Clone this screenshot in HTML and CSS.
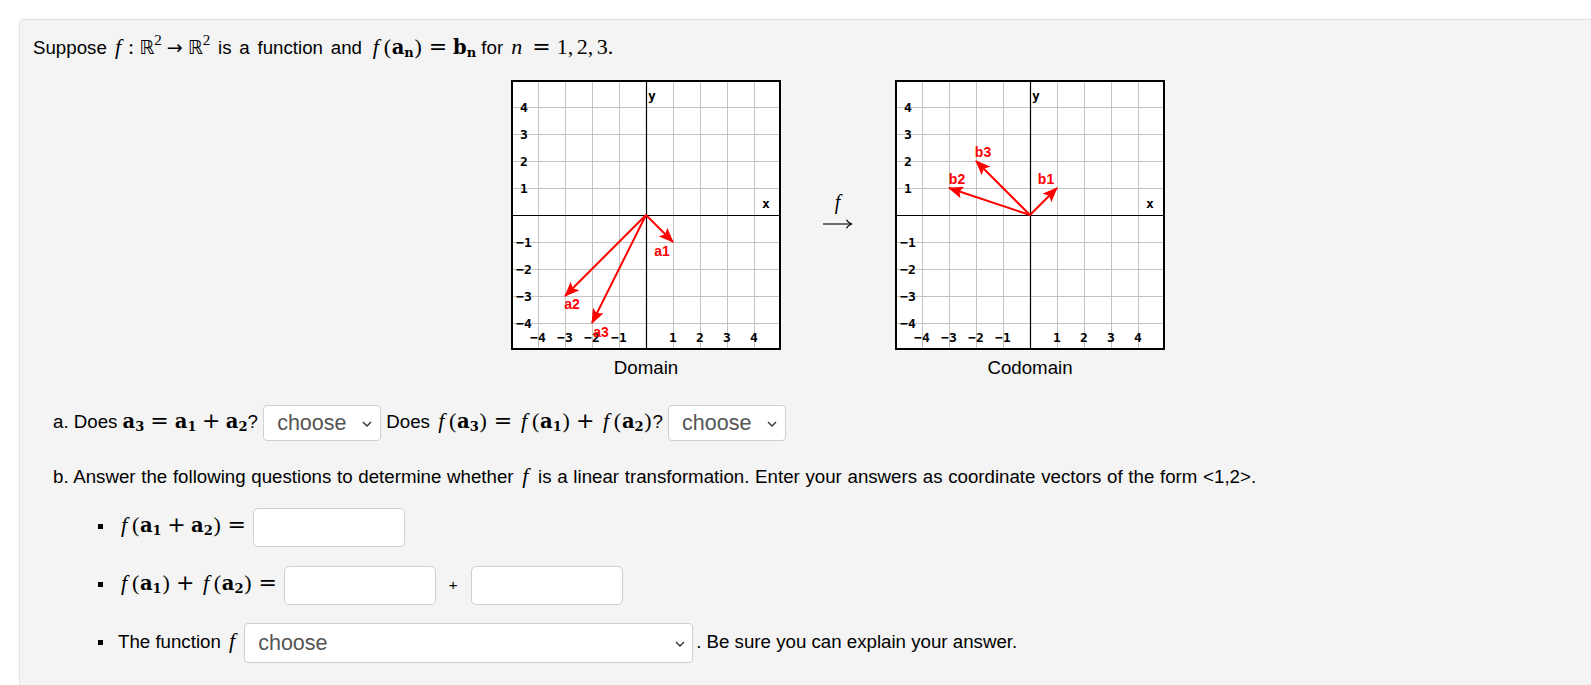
FILE: index.html
```html
<!DOCTYPE html>
<html lang="en">
<head>
<meta charset="utf-8">
<title>Linear transformation problem</title>
<link rel="stylesheet" href="styles.css">
</head>
<body>
<div class="panel">
  <p class="intro">Suppose <span class="m"><i class="mi">f</i><span class="colon">:</span><span class="bb">ℝ</span><sup>2</sup><span class="op arr rel">→</span><span class="bb">ℝ</span><sup>2</sup></span><span class="wide"> is a function and </span><span class="m"><i class="mi">f</i><span class="pa">(</span><b class="mb">a</b><sub>n</sub><span class="pa">)</span><span class="op rel">=</span><b class="mb">b</b><sub>n</sub></span> for <span class="m"><i class="mi">n</i><span class="op rel">=</span>1,<span class="thin"></span>2,<span class="thin"></span>3.</span></p>

  <div class="graphs">
    <figure class="graph">
      <svg width="270" height="270" viewBox="0 0 270 270" class="plot">
        <defs>
          <marker id="ah" markerUnits="userSpaceOnUse" markerWidth="15" markerHeight="12" refX="14" refY="6" orient="auto">
            <path d="M0,0 L15,6 L0,12 L3,6 z" fill="#ff0000"/>
          </marker>
        </defs>
        <rect x="0" y="0" width="270" height="270" fill="#fff"/>
        <g stroke="#c4c4c4" stroke-width="1">
          <path d="M27.5,0V270M54.5,0V270M81.5,0V270M108.5,0V270M162.5,0V270M189.5,0V270M216.5,0V270M243.5,0V270"/>
          <path d="M0,27.5H270M0,54.5H270M0,81.5H270M0,108.5H270M0,162.5H270M0,189.5H270M0,216.5H270M0,243.5H270"/>
        </g>
        <path d="M135.5,0V270M0,135.5H270" stroke="#000" stroke-width="1.2"/>
        <rect x="1" y="1" width="268" height="268" fill="none" stroke="#000" stroke-width="2"/>
        <g class="ticks">
          <text x="13" y="32">4</text><text x="13" y="59">3</text><text x="13" y="86">2</text><text x="13" y="113">1</text>
          <text x="13" y="167">−1</text><text x="13" y="194">−2</text><text x="13" y="221">−3</text><text x="13" y="248">−4</text>
          <text x="27" y="262">−4</text><text x="54" y="262">−3</text><text x="81" y="262">−2</text><text x="108" y="262">−1</text>
          <text x="162" y="262">1</text><text x="189" y="262">2</text><text x="216" y="262">3</text><text x="243" y="262">4</text>
          <text x="141" y="20">y</text><text x="255" y="128">x</text>
        </g>
        <g stroke="#ff0000" stroke-width="2" marker-end="url(#ah)">
          <line x1="135" y1="135" x2="162" y2="162"/>
          <line x1="135" y1="135" x2="54" y2="216"/>
          <line x1="135" y1="135" x2="81" y2="243"/>
        </g>
        <g class="vlab">
          <text x="151" y="176">a1</text><text x="61" y="229">a2</text><text x="90" y="257">a3</text>
        </g>
      </svg>
      <figcaption>Domain</figcaption>
    </figure>

    <div class="maps">
      <i class="mi">f</i>
      <svg width="30" height="10" viewBox="0 0 30 10" class="maparrow"><path d="M0,5H28" stroke="#000" stroke-width="1.1" fill="none"/><path d="M23.5,0.8 Q25,4 29,5 Q25,6 23.5,9.2" stroke="#000" stroke-width="1.1" fill="none"/></svg>
    </div>

    <figure class="graph">
      <svg width="270" height="270" viewBox="0 0 270 270" class="plot">
        <defs>
          <marker id="bh" markerUnits="userSpaceOnUse" markerWidth="15" markerHeight="12" refX="14" refY="6" orient="auto">
            <path d="M0,0 L15,6 L0,12 L3,6 z" fill="#ff0000"/>
          </marker>
        </defs>
        <rect x="0" y="0" width="270" height="270" fill="#fff"/>
        <g stroke="#c4c4c4" stroke-width="1">
          <path d="M27.5,0V270M54.5,0V270M81.5,0V270M108.5,0V270M162.5,0V270M189.5,0V270M216.5,0V270M243.5,0V270"/>
          <path d="M0,27.5H270M0,54.5H270M0,81.5H270M0,108.5H270M0,162.5H270M0,189.5H270M0,216.5H270M0,243.5H270"/>
        </g>
        <path d="M135.5,0V270M0,135.5H270" stroke="#000" stroke-width="1.2"/>
        <rect x="1" y="1" width="268" height="268" fill="none" stroke="#000" stroke-width="2"/>
        <g class="ticks">
          <text x="13" y="32">4</text><text x="13" y="59">3</text><text x="13" y="86">2</text><text x="13" y="113">1</text>
          <text x="13" y="167">−1</text><text x="13" y="194">−2</text><text x="13" y="221">−3</text><text x="13" y="248">−4</text>
          <text x="27" y="262">−4</text><text x="54" y="262">−3</text><text x="81" y="262">−2</text><text x="108" y="262">−1</text>
          <text x="162" y="262">1</text><text x="189" y="262">2</text><text x="216" y="262">3</text><text x="243" y="262">4</text>
          <text x="141" y="20">y</text><text x="255" y="128">x</text>
        </g>
        <g stroke="#ff0000" stroke-width="2" marker-end="url(#bh)">
          <line x1="135" y1="135" x2="162" y2="108"/>
          <line x1="135" y1="135" x2="54" y2="108"/>
          <line x1="135" y1="135" x2="81" y2="81"/>
        </g>
        <g class="vlab">
          <text x="151" y="104">b1</text><text x="62" y="104">b2</text><text x="88" y="77">b3</text>
        </g>
      </svg>
      <figcaption>Codomain</figcaption>
    </figure>
  </div>

  <div class="part part-a">a. Does <span class="m"><b class="mb">a</b><sub>3</sub><span class="op rel">=</span><b class="mb">a</b><sub>1</sub><span class="op bin">+</span><b class="mb">a</b><sub>2</sub></span>? <span class="sel sel-sm"><select aria-label="a3 = a1 + a2"><option>choose</option><option>Yes</option><option>No</option></select><svg class="chev" width="10" height="6" viewBox="0 0 10 6"><path d="M1,1 L5,5 L9,1" fill="none" stroke="#333" stroke-width="1.4"/></svg></span> Does <span class="m"><i class="mi">f</i><span class="pa">(</span><b class="mb">a</b><sub>3</sub><span class="pa">)</span><span class="op rel">=</span><i class="mi">f</i><span class="pa">(</span><b class="mb">a</b><sub>1</sub><span class="pa">)</span><span class="op bin">+</span><i class="mi">f</i><span class="pa">(</span><b class="mb">a</b><sub>2</sub><span class="pa">)</span></span>? <span class="sel sel-sm"><select aria-label="f(a3) = f(a1) + f(a2)"><option>choose</option><option>Yes</option><option>No</option></select><svg class="chev" width="10" height="6" viewBox="0 0 10 6"><path d="M1,1 L5,5 L9,1" fill="none" stroke="#333" stroke-width="1.4"/></svg></span></div>

  <p class="part part-b">b. Answer the following questions to determine whether <i class="mi">f</i> is a linear transformation. Enter your answers as coordinate vectors of the form &lt;1,2&gt;.</p>

  <ul class="items">
    <li><span class="m"><i class="mi">f</i><span class="pa">(</span><b class="mb">a</b><sub>1</sub><span class="op bin">+</span><b class="mb">a</b><sub>2</sub><span class="pa">)</span><span class="op rel">=</span></span><input class="ans" type="text" aria-label="f(a1+a2)"></li>
    <li><span class="m"><i class="mi">f</i><span class="pa">(</span><b class="mb">a</b><sub>1</sub><span class="pa">)</span><span class="op bin">+</span><i class="mi">f</i><span class="pa">(</span><b class="mb">a</b><sub>2</sub><span class="pa">)</span><span class="op rel">=</span></span><input class="ans" type="text" aria-label="f(a1)"><span class="plus">+</span><input class="ans" type="text" aria-label="f(a2)"></li>
    <li>The function <i class="mi">f</i><span class="sel sel-lg"><select aria-label="The function f"><option>choose</option><option>is a linear transformation</option><option>is not a linear transformation</option></select><svg class="chev" width="10" height="6" viewBox="0 0 10 6"><path d="M1,1 L5,5 L9,1" fill="none" stroke="#333" stroke-width="1.4"/></svg></span>. Be sure you can explain your answer.</li>
  </ul>
</div>
</body>
</html>
```

FILE: styles.css
```css
html, body {
  margin: 0;
  padding: 0;
  background: #ffffff;
}

body {
  font-family: "Liberation Sans", Arial, sans-serif;
  font-size: 18.7px;
  color: #000;
  padding: 19px 0 0 19px;
  overflow: hidden;
}

.panel {
  background: #f4f4f4;
  border: 1px solid #e2e2e2;
  border-right: none;
  border-radius: 5px 0 0 0;
  padding: 15px 0 40px 13px;
  min-height: 700px;
}

p { margin: 0; }

.m {
  font-family: "Liberation Serif", "DejaVu Serif", serif;
  font-size: 22px;
  line-height: 1;
  white-space: nowrap;
}

.mi {
  font-family: "Liberation Serif", "DejaVu Serif", serif;
  font-style: italic;
  font-size: 22px;
  line-height: 1;
  font-weight: normal;
  padding: 0 4px 0 3px;
}

.mb {
  font-family: "DejaVu Serif", serif;
  font-weight: bold;
  font-size: 19.5px;
}

.m sub {
  font-family: "DejaVu Serif", serif;
  font-weight: bold;
  font-size: 13px;
  vertical-align: -3px;
  line-height: 0;
}

.m sup {
  font-size: 15px;
  vertical-align: 9px;
  line-height: 0;
}

.bb {
  font-family: "DejaVu Sans", sans-serif;
  font-size: 19px;
}

.op {
  font-family: "DejaVu Sans", sans-serif;
  font-size: 22px;
}

.arr {
  font-size: 19px;
}

.colon {
  font-family: "Liberation Serif", serif;
  margin: 0 5px 0 3px;
}

.pa {
  font-family: "Liberation Serif", serif;
  font-size: 22px;
  padding: 0 0.75px;
}

.rel { margin: 0 6px; }
.bin { margin: 0 5.5px; }
.arr.rel { margin: 0 5px; }
.thin { display: inline-block; width: 3.5px; }

.intro {
  line-height: 26px;
}

.wide { word-spacing: 2.6px; }

.graphs {
  display: flex;
  align-items: flex-start;
  margin: 19px 0 0 478px;
}

.graph {
  margin: 0;
  width: 270px;
  display: flex;
  flex-direction: column;
  align-items: center;
}

.plot { display: block; }

.ticks text {
  font-family: "DejaVu Sans Mono", monospace;
  font-weight: bold;
  font-size: 13px;
  fill: #000;
  text-anchor: middle;
}

.vlab text {
  font-family: "Liberation Sans", Arial, sans-serif;
  font-weight: bold;
  font-size: 14px;
  fill: #ff0000;
  text-anchor: middle;
}

figcaption {
  margin-top: 5px;
  line-height: 26px;
}

.maps {
  width: 29px;
  margin: 111px 43px 0 42px;
  display: flex;
  flex-direction: column;
  align-items: center;
}

.maps .mi {
  font-size: 20px;
  line-height: 22px;
  padding: 0;
}

.maparrow { display: block; margin-top: 6px; }

.part { padding-left: 20px; }

.part-a {
  margin-top: 23px;
  height: 36px;
  line-height: 36px;
  white-space: nowrap;
}

.part-b {
  margin-top: 25px;
  line-height: 24px;
  word-spacing: 0.5px;
}

.sel {
  position: relative;
  display: inline-block;
  vertical-align: middle;
  line-height: normal;
}

.sel select {
  appearance: none;
  -webkit-appearance: none;
  display: block;
  background: #fff;
  border: 1px solid #cfcfcf;
  border-radius: 4px;
  font-family: "Liberation Sans", Arial, sans-serif;
  font-size: 21.5px;
  color: #555;
  padding: 0 26px 0 13px;
  margin: 0;
}

.sel-sm select { width: 118px; height: 36px; }
.sel-lg select { width: 449px; height: 40px; }

.chev {
  position: absolute;
  right: 9px;
  top: 50%;
  margin-top: -2px;
  pointer-events: none;
}

.sel-lg .chev { right: 8px; }

.items {
  list-style: none;
  margin: 17px 0 0 0;
  padding: 0 0 0 85px;
}

.items li {
  position: relative;
  height: 40px;
  margin-bottom: 18px;
  line-height: 40px;
  white-space: nowrap;
}

.items li::before {
  content: "";
  position: absolute;
  left: -20px;
  top: 18px;
  width: 5px;
  height: 5px;
  background: #000;
}

.ans {
  width: 152px;
  height: 39px;
  box-sizing: border-box;
  border: 1px solid #cfcfcf;
  border-radius: 5px;
  background: #fff;
  vertical-align: middle;
  margin: 0 0 0 1px;
  font-size: 16px;
}

.plus {
  display: inline-block;
  margin: 0 13px 0 13px;
  font-size: 15px;
  vertical-align: middle;
  line-height: 20px;
}

.items .plus + .ans { margin-left: 0; }

.items .sel { margin: 0 3px 0 5px; }
```
